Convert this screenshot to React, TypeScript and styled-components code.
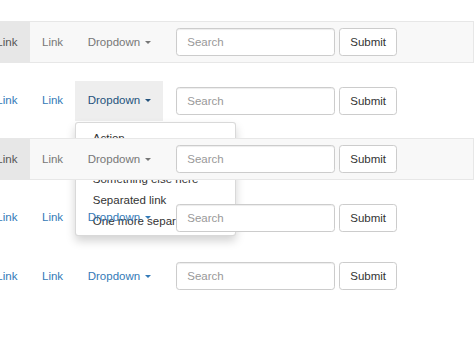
import React from 'react';
import styled, { createGlobalStyle, css } from 'styled-components';

const GlobalStyle = createGlobalStyle`
	html, body {
		margin: 0;
		padding: 0;
		background: #fff;
		overflow: hidden;
	}
	body {
		font-family: 'Liberation Sans', Arial, Helvetica, sans-serif;
		font-size: 11.5px;
		color: #333;
	}
`;

type Variant = 'default' | 'plain';

const Page = styled.div`
	padding-top: 21px;
	width: 474px;
	height: 338px;
	box-sizing: border-box;
`;

// Each bar stacks above the previous one, so an open menu slides under
// the bars that follow it (as in the reference).
const Navbar = styled.nav<{ $variant: Variant }>`
	position: relative;
	z-index: 1;
	display: flex;
	align-items: center;
	height: 42px;
	box-sizing: border-box;
	margin-bottom: 16.5px;
	border: 1px solid transparent;
	${({ $variant }) =>
		$variant === 'default' &&
		css`
			background-color: #f8f8f8;
			border-color: #e7e7e7;
		`}
`;

const NavList = styled.ul`
	display: flex;
	align-items: stretch;
	height: 100%;
	margin: 0 0 0 -17px;
	padding: 0;
	list-style: none;
`;

const NavItem = styled.li`
	position: relative;
	display: flex;
`;

const NavLink = styled.a<{ $variant: Variant; $active?: boolean; $open?: boolean }>`
	display: flex;
	align-items: center;
	padding: 0 12.3px;
	line-height: 16.4px;
	text-decoration: none;
	cursor: pointer;
	color: ${({ $variant }) => ($variant === 'default' ? '#777' : '#337ab7')};
	${({ $variant, $active }) =>
		$active &&
		$variant === 'default' &&
		css`
			color: #555;
			background-color: #e7e7e7;
		`}
	${({ $open }) =>
		$open &&
		css`
			color: #23527c;
			background-color: #eee;
		`}
`;

const Caret = styled.span`
	display: inline-block;
	width: 0;
	height: 0;
	margin-left: 5px;
	border-top: 3.3px solid;
	border-left: 3.3px solid transparent;
	border-right: 3.3px solid transparent;
	vertical-align: middle;
`;

const Menu = styled.ul`
	position: absolute;
	top: 100%;
	left: 0;
	margin: 1.6px 0 0;
	padding: 4.1px 0;
	list-style: none;
	background: #fff;
	border: 1px solid rgba(0, 0, 0, 0.15);
	border-radius: 3.3px;
	box-shadow: 0 5px 10px rgba(0, 0, 0, 0.175);
	white-space: nowrap;
	min-width: 131px;
`;

const MenuLink = styled.a`
	display: block;
	padding: 2.4px 16.4px;
	line-height: 16px;
	color: #333;
	text-decoration: none;
`;

const SearchForm = styled.form`
	display: flex;
	align-items: center;
	gap: 4px;
	margin: 0 0 0 13px;
`;

const SearchInput = styled.input`
	width: 159px;
	height: 28px;
	box-sizing: border-box;
	padding: 0 9.8px;
	font-family: inherit;
	font-size: 11.5px;
	color: #555;
	background: #fff;
	border: 1px solid #ccc;
	border-radius: 3.3px;
	box-shadow: inset 0 1px 1px rgba(0, 0, 0, 0.075);
	outline: none;

	&::placeholder {
		color: #999;
	}
`;

const SubmitButton = styled.button`
	height: 28px;
	box-sizing: border-box;
	padding: 0 9.8px;
	font-family: inherit;
	font-size: 11.5px;
	color: #333;
	background: #fff;
	border: 1px solid #ccc;
	border-radius: 3.3px;
	cursor: pointer;
`;

const menuItems = [
	'Action',
	'Another action',
	'Something else here',
	'Separated link',
	'One more separated link',
];

function Bar({ variant, open = false }: { variant: Variant; open?: boolean }) {
	return (
		<Navbar $variant={variant}>
			<NavList>
				<NavItem>
					<NavLink $variant={variant} $active>
						Link
					</NavLink>
				</NavItem>
				<NavItem>
					<NavLink $variant={variant}>Link</NavLink>
				</NavItem>
				<NavItem>
					<NavLink $variant={variant} $open={open}>
						Dropdown
						<Caret />
					</NavLink>
					{open && (
						<Menu>
							{menuItems.map((item) => (
								<li key={item}>
									<MenuLink>{item}</MenuLink>
								</li>
							))}
						</Menu>
					)}
				</NavItem>
			</NavList>
			<SearchForm onSubmit={(e) => e.preventDefault()}>
				<SearchInput type="text" placeholder="Search" />
				<SubmitButton type="submit">Submit</SubmitButton>
			</SearchForm>
		</Navbar>
	);
}

export default function App() {
	return (
		<>
			<GlobalStyle />
			<Page>
				<Bar variant="default" />
				<Bar variant="plain" open />
				<Bar variant="default" />
				<Bar variant="plain" />
				<Bar variant="plain" />
			</Page>
		</>
	);
}
